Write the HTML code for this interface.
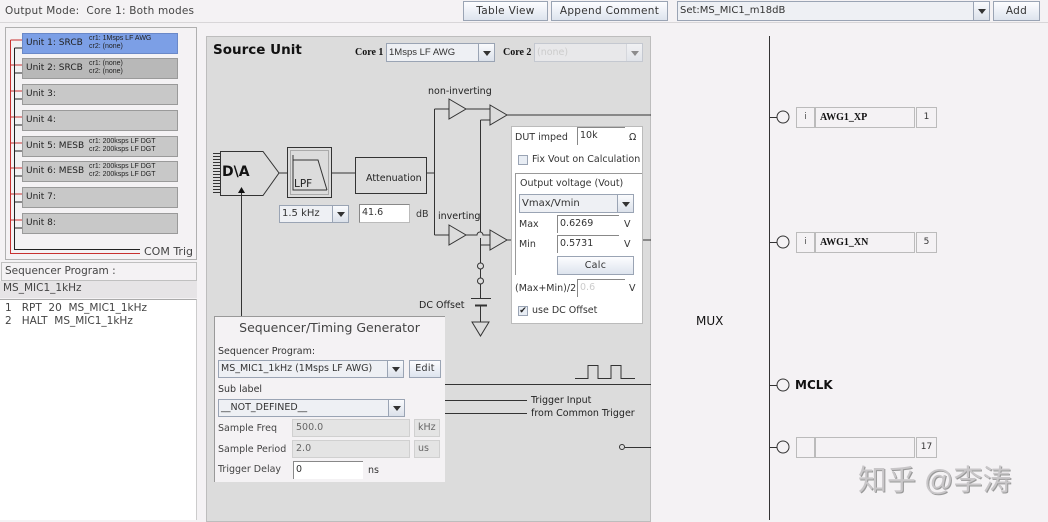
<!DOCTYPE html>
<html><head><meta charset="utf-8"><style>
*{margin:0;padding:0;box-sizing:border-box}
body{width:1048px;height:520px;overflow:hidden;background:#f4f2f4;font-family:"DejaVu Sans","Liberation Sans",sans-serif;font-size:10px;color:#333;position:relative}
.a{position:absolute;white-space:nowrap}
.btn{position:absolute;border:1px solid #9aa4b4;background:linear-gradient(#fdfdff,#dde4ee);text-align:center;font-size:10.5px;color:#333;letter-spacing:.3px}
.combo{position:absolute;border:1px solid #9aa4b4;background:#eef0f4;font-size:9.5px;padding-left:2px;color:#333}
.combo .ar{position:absolute;right:0;top:0;bottom:0;width:16px;border-left:1px solid #9aa4b4;background:linear-gradient(#fafbfd,#dbe1ea)}
.combo .ar:after{content:"";position:absolute;left:4px;top:50%;margin-top:-2px;border-left:4px solid transparent;border-right:4px solid transparent;border-top:5px solid #333}
.unit{position:absolute;left:22px;width:156px;height:21px;background:#c8c8c8;border:1px solid #9a9a9a;font-size:9px;color:#222}
.unit .n{position:absolute;left:3px;top:4px}
.unit .c{position:absolute;left:66px;top:1px;font-size:7px;line-height:8px;font-family:"Liberation Sans",sans-serif}
.fld{position:absolute;border:1px solid #bbb;border-top-color:#888;border-left-color:#888;background:#fff;font-size:9.5px;padding-left:2px}
.gf{position:absolute;background:#e4e4e4;border:1px solid #d0d0d0;color:#666;font-size:9.5px;padding-left:3px;line-height:16px}
.pin{position:absolute;height:21px;border:1px solid #bbb;background:#f4f2f4;font-size:9px}
</style></head><body>
<div class="a" style="left:5px;top:5px;font-size:10.5px;color:#444;letter-spacing:.2px">Output Mode:&nbsp; Core 1: Both modes</div>
<div class="btn" style="left:463px;top:1px;width:85px;height:20px;line-height:18px">Table View</div>
<div class="btn" style="left:551px;top:1px;width:117px;height:20px;line-height:18px">Append Comment</div>
<div class="combo" style="left:677px;top:1px;width:313px;height:20px;line-height:18px;font-size:10px">Set:MS_MIC1_m18dB<div class="ar"></div></div>
<div class="btn" style="left:993px;top:1px;width:47px;height:20px;line-height:18px">Add</div>
<div class="a" style="left:0;top:22px;width:1048px;height:1px;background:#d8d6d8"></div>

<div class="a" style="left:5px;top:27px;width:192px;height:233px;border:1px solid #b0b0b0;background:#f4f2f4"></div>
<svg class="a" style="left:0;top:0" width="200" height="262">
<g stroke="#c83030" stroke-width="1" fill="none">
<path d="M10.5 40V253.5H140"/>
<path d="M10.5 40H22M10.5 65H22M10.5 91H22M10.5 117H22M10.5 143H22M10.5 168H22M10.5 194H22M10.5 220H22"/>
</g>
<g stroke="#222" stroke-width="1" fill="none">
<path d="M14.5 48V249.5H140"/>
<path d="M14.5 48H22M14.5 73H22M14.5 99H22M14.5 125H22M14.5 151H22M14.5 176H22M14.5 202H22M14.5 228H22"/>
</g>
</svg>
<div class="unit" style="top:33px;background:#7c9fe6;border-color:#6a88c8"><span class="n">Unit 1: SRCB</span><span class="c">cr1: 1Msps LF AWG<br>cr2: (none)</span></div>
<div class="unit" style="top:58px;background:#b8b8b8"><span class="n">Unit 2: SRCB</span><span class="c">cr1: (none)<br>cr2: (none)</span></div>
<div class="unit" style="top:84px"><span class="n">Unit 3:</span></div>
<div class="unit" style="top:110px"><span class="n">Unit 4:</span></div>
<div class="unit" style="top:136px"><span class="n">Unit 5: MESB</span><span class="c">cr1: 200ksps LF DGT<br>cr2: 200ksps LF DGT</span></div>
<div class="unit" style="top:161px"><span class="n">Unit 6: MESB</span><span class="c">cr1: 200ksps LF DGT<br>cr2: 200ksps LF DGT</span></div>
<div class="unit" style="top:187px"><span class="n">Unit 7:</span></div>
<div class="unit" style="top:213px"><span class="n">Unit 8:</span></div>
<div class="a" style="left:144px;top:245px;font-size:11px;color:#444">COM Trig</div>

<div class="a" style="left:1px;top:262px;width:196px;height:19px;border:1px solid #c0c0c0;background:#f4f2f4;font-size:10.5px;padding:2px 0 0 3px;color:#444">Sequencer Program :</div>
<div class="a" style="left:0;top:281px;width:197px;height:17px;background:#e6e4e6;font-size:10.5px;padding:1px 0 0 3px;color:#444">MS_MIC1_1kHz</div>
<div class="a" style="left:0;top:299px;width:197px;height:221px;background:#fff;border-top:1px solid #aaa;border-right:1px solid #ccc;font-size:10.5px;color:#444;padding:2px 0 0 5px;line-height:13px">1&nbsp;&nbsp; RPT&nbsp; 20&nbsp; MS_MIC1_1kHz<br>2&nbsp;&nbsp; HALT&nbsp; MS_MIC1_1kHz</div>

<div class="a" style="left:206px;top:36px;width:445px;height:486px;background:#dcdcdc;border:1px solid #bdbdbd"></div>
<div class="a" style="left:213px;top:42px;font-size:13.5px;font-weight:bold;color:#111">Source Unit</div>
<div class="a" style="left:355px;top:47px;font-family:'Liberation Serif',serif;font-weight:bold;font-size:10px;color:#111">Core 1</div>
<div class="combo" style="left:386px;top:43px;width:109px;height:19px;line-height:17px;font-family:'Liberation Sans',sans-serif">1Msps LF AWG<div class="ar"></div></div>
<div class="a" style="left:503px;top:47px;font-family:'Liberation Serif',serif;font-weight:bold;font-size:10px;color:#111">Core 2</div>
<div class="combo" style="left:534px;top:43px;width:109px;height:19px;line-height:17px;color:#ccc;border-color:#c4c8d0;background:#e8e8ea">(none)<div class="ar" style="border-color:#c4c8d0;opacity:.5"></div></div>

<svg class="a" style="left:0;top:0" width="1048" height="520">
<g stroke="#333" stroke-width="1" fill="none">
<path d="M213 153.5H220M213 156.5H220M213 159.5H220M213 162.5H220M213 165.5H220M213 168.5H220M213 171.5H220M213 174.5H220M213 177.5H220M213 180.5H220M213 183.5H220M213 186.5H220M213 189.5H220M213 192.5H220"/>
<path d="M220.5 151.5H263L279 173L263 195.5H220.5Z" fill="#dcdcdc"/>
<path d="M279 173H287M332 173H355M427 173H434.5"/>
<rect x="287.5" y="147.5" width="44" height="50"/>
<rect x="290.5" y="150.5" width="38" height="44" stroke="#aaa"/>
<path d="M293 155V190H327M293 160H318L327 190" stroke="#333"/>
<rect x="355.5" y="157.5" width="71" height="36"/>
<path d="M434.5 109V235M434.5 109H449M434.5 235H449"/>
<path d="M449 99L466 109L449 119Z"/>
<path d="M466 109H490"/>
<path d="M490 105L507 115L490 125Z"/>
<path d="M480.5 120H490M480.5 120V232M480.5 238V263"/>
<path d="M466 235H477A3 3 0 0 1 483 235H490" />
<path d="M449 225L466 235L449 245Z"/>
<path d="M480.5 245H490"/>
<path d="M490 230L507 240L490 250Z"/>
<path d="M507 115H651M507 240H511M642 240H651"/>
<circle cx="480.5" cy="266" r="3"/>
<path d="M480.5 269V278"/>
<circle cx="480.5" cy="281" r="3"/>
<path d="M480.5 284V298"/>
<path d="M471 298.5H491" />
<path d="M475 305.5H487" stroke-width="2"/>
<path d="M480.5 306V322M472 322H489L480.5 336Z"/>
<path d="M241.5 193V317"/>
<path d="M575 378.5H588V365.5H598V378.5H611V365.5H621V378.5H635"/>
<path d="M445 384.5H651M445 400.5H527M445 413.5H527"/>
<circle cx="622" cy="447" r="2.5"/>
<path d="M625 447.5H651"/>
<path d="M769.5 36V520"/>
<path d="M769 117.5H777M769 242.5H777M769 385.5H777M769 447.5H777"/>
<circle cx="783" cy="117" r="6" fill="#f4f2f4"/>
<circle cx="783" cy="242" r="6" fill="#f4f2f4"/>
<circle cx="783" cy="385" r="6" fill="#f4f2f4"/>
<circle cx="783" cy="447" r="6" fill="#f4f2f4"/>
</g>
<polygon points="238,193 241.5,187 245,193" fill="#111"/>
</svg>
<div class="a" style="left:222px;top:164px;font-size:14px;font-weight:bold;color:#111">D\A</div>
<div class="a" style="left:294px;top:178px;font-size:10.5px;color:#222">LPF</div>
<div class="a" style="left:366px;top:173px;font-size:9.5px;color:#222">Attenuation</div>
<div class="combo" style="left:279px;top:205px;width:70px;height:18px;line-height:16px;font-size:10px">1.5 kHz<div class="ar"></div></div>
<div class="fld" style="left:359px;top:204px;width:51px;height:19px;line-height:16px">41.6</div>
<div class="a" style="left:416px;top:209px;font-size:9.5px">dB</div>
<div class="a" style="left:428px;top:86px;font-size:9.5px;color:#222">non-inverting</div>
<div class="a" style="left:438px;top:211px;font-size:9.5px;color:#222">inverting</div>
<div class="a" style="left:419px;top:300px;font-size:9.5px;color:#222">DC Offset</div>

<div class="a" style="left:511px;top:126px;width:132px;height:198px;background:#fff;border:1px solid #bbb"></div>
<div class="a" style="left:515px;top:132px;font-size:9.5px">DUT imped</div>
<div class="fld" style="left:577px;top:127px;width:48px;height:18px;line-height:15px;border-right:none;border-bottom:none">10k</div>
<div class="a" style="left:629px;top:132px;font-size:9.5px">Ω</div>
<div class="a" style="left:518px;top:155px;width:10px;height:10px;border:1px solid #9aa4b4;background:#e8edf4"></div>
<div class="a" style="left:532px;top:154px;font-size:9.5px">Fix Vout on Calculation</div>
<div class="a" style="left:515px;top:173px;width:127px;height:102px;border-left:1px solid #999;border-top:1px solid #999"></div>
<div class="a" style="left:520px;top:178px;font-size:9.5px">Output voltage (Vout)</div>
<div class="combo" style="left:519px;top:194px;width:115px;height:19px;line-height:17px;font-size:10px">Vmax/Vmin<div class="ar"></div></div>
<div class="a" style="left:519px;top:219px;font-size:9.5px">Max</div>
<div class="fld" style="left:557px;top:215px;width:62px;height:18px;line-height:15px;border-right:none;border-bottom:none">0.6269</div>
<div class="a" style="left:624px;top:219px;font-size:9.5px">V</div>
<div class="a" style="left:519px;top:239px;font-size:9.5px">Min</div>
<div class="fld" style="left:557px;top:235px;width:62px;height:18px;line-height:15px;border-right:none;border-bottom:none">0.5731</div>
<div class="a" style="left:624px;top:239px;font-size:9.5px">V</div>
<div class="btn" style="left:557px;top:256px;width:77px;height:19px;line-height:17px;font-size:9.5px">Calc</div>
<div class="a" style="left:515px;top:283px;font-size:9.5px">(Max+Min)/2</div>
<div class="fld" style="left:577px;top:279px;width:48px;height:18px;line-height:15px;border-right:none;border-bottom:none;color:#ccc">0.6</div>
<div class="a" style="left:629px;top:283px;font-size:9.5px">V</div>
<div class="a" style="left:518px;top:306px;width:10px;height:10px;border:1px solid #9aa4b4;background:#e8edf4;font-size:9px;line-height:8px;text-align:center;color:#222">✔</div>
<div class="a" style="left:532px;top:305px;font-size:9.5px">use DC Offset</div>

<div class="a" style="left:214px;top:316px;width:231px;height:166px;background:#f4f2f4;border-left:1px solid #999;border-top:1px solid #999"></div>
<div class="a" style="left:214px;top:320px;width:231px;text-align:center;font-size:12.5px;color:#444">Sequencer/Timing Generator</div>
<div class="a" style="left:218px;top:346px;font-size:9.5px">Sequencer Program:</div>
<div class="combo" style="left:218px;top:360px;width:186px;height:18px;line-height:16px">MS_MIC1_1kHz (1Msps LF AWG)<div class="ar"></div></div>
<div class="btn" style="left:409px;top:360px;width:32px;height:18px;line-height:16px;font-size:9.5px">Edit</div>
<div class="a" style="left:218px;top:384px;font-size:9.5px">Sub label</div>
<div class="combo" style="left:218px;top:399px;width:187px;height:18px;line-height:16px">__NOT_DEFINED__<div class="ar"></div></div>
<div class="a" style="left:218px;top:423px;font-size:9.5px;color:#444">Sample Freq</div>
<div class="gf" style="left:292px;top:419px;width:118px;height:18px">500.0</div>
<div class="gf" style="left:414px;top:419px;width:26px;height:18px">kHz</div>
<div class="a" style="left:218px;top:444px;font-size:9.5px;color:#444">Sample Period</div>
<div class="gf" style="left:292px;top:440px;width:118px;height:18px">2.0</div>
<div class="gf" style="left:414px;top:440px;width:26px;height:18px">us</div>
<div class="a" style="left:218px;top:464px;font-size:9.5px;color:#444">Trigger Delay</div>
<div class="fld" style="left:293px;top:461px;width:70px;height:18px;line-height:15px;border-right:none;border-bottom:none">0</div>
<div class="a" style="left:368px;top:465px;font-size:9.5px">ns</div>
<div class="a" style="left:531px;top:395px;font-size:9.5px;color:#222">Trigger Input</div>
<div class="a" style="left:531px;top:408px;font-size:9.5px;color:#222">from Common Trigger</div>

<div class="a" style="left:696px;top:314px;font-size:12px;color:#111">MUX</div>
<div class="pin" style="left:796px;top:107px;width:19px;text-align:center;line-height:19px;color:#555">i</div>
<div class="pin" style="left:815px;top:107px;width:100px;padding-left:4px;line-height:19px;font-family:'Liberation Serif',serif;font-weight:bold;font-size:10px;color:#111">AWG1_XP</div>
<div class="pin" style="left:916px;top:107px;width:21px;text-align:center;line-height:19px">1</div>
<div class="pin" style="left:796px;top:232px;width:19px;text-align:center;line-height:19px;color:#555">i</div>
<div class="pin" style="left:815px;top:232px;width:100px;padding-left:4px;line-height:19px;font-family:'Liberation Serif',serif;font-weight:bold;font-size:10px;color:#111">AWG1_XN</div>
<div class="pin" style="left:916px;top:232px;width:21px;text-align:center;line-height:19px">5</div>
<div class="a" style="left:795px;top:378px;font-size:12px;font-weight:bold;color:#111">MCLK</div>
<div class="pin" style="left:796px;top:437px;width:19px"></div>
<div class="pin" style="left:815px;top:437px;width:100px"></div>
<div class="pin" style="left:916px;top:437px;width:21px;text-align:center;line-height:19px">17</div>
<div class="a" style="left:858px;top:457px;font-size:29px;color:#c8c6c8;font-family:'Liberation Sans','Noto Sans CJK SC',sans-serif;text-shadow:1px 1px 0 #999">知乎 @李涛</div>
</body></html>
